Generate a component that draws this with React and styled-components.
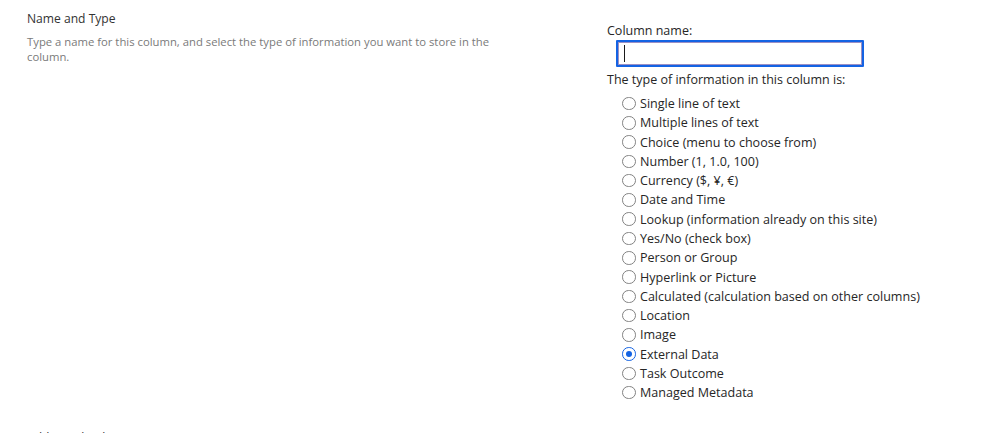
import React from "react";
import styled, { createGlobalStyle } from "styled-components";

const Global = createGlobalStyle`
  html, body { margin: 0; padding: 0; background: #fff; }
  body { font-family: "Segoe UI", "Open Sans", "Noto Sans", sans-serif; color: #323130; }
`;

const Page = styled.div`
  display: flex;
  flex-direction: column;
  padding-top: 10px;
`;

const Section = styled.section`
  display: grid;
  grid-template-columns: 580px 1fr;
  padding-left: 27px;
  padding-bottom: ${(p) => p.$gap || 0}px;
`;

const Info = styled.div`
  display: flex;
  flex-direction: column;
  gap: 6px;
  max-width: 482px;
`;

const Heading = styled.h2`
  margin: 0;
  font-size: 12.1px;
  font-weight: 400;
  line-height: 18px;
  color: #333;
`;

const Description = styled.p`
  margin: 0;
  font-size: 11.3px;
  line-height: 15px;
  color: #7a7a7a;
`;

const Fields = styled.div`
  display: flex;
  flex-direction: column;
  padding-top: 12px;
`;

const Label = styled.div`
  font-size: 12.5px;
  line-height: 18px;
  color: #262626;
`;

const InputBox = styled.div`
  box-sizing: border-box;
  width: 248px;
  height: 27px;
  margin: 0 0 4px 9px;
  border: 2px solid #1463e3;
  box-shadow: inset 0 0 0 1px #9b8fc4;
  border-radius: 1px;
  display: flex;
  align-items: center;
  padding-left: 6px;
`;

const Caret = styled.span`
  width: 1px;
  height: 17px;
  background: #1a1a1a;
`;

const RadioList = styled.div`
  display: flex;
  flex-direction: column;
  padding: 5px 0 0 15px;
`;

const RadioRow = styled.label`
  display: flex;
  align-items: center;
  gap: 4.5px;
  height: 19.27px;
  font-size: 12.55px;
  color: #262626;
`;

const Circle = styled.span`
  box-sizing: border-box;
  width: 13.5px;
  height: 13.5px;
  border-radius: 50%;
  border: 1.7px solid ${(p) => (p.$checked ? "#1463e3" : "#828282")};
  display: flex;
  align-items: center;
  justify-content: center;
  flex: none;
  &::after {
    content: "";
    width: 6px;
    height: 6px;
    border-radius: 50%;
    background: ${(p) => (p.$checked ? "#1463e3" : "transparent")};
  }
`;

const options = [
  "Single line of text",
  "Multiple lines of text",
  "Choice (menu to choose from)",
  "Number (1, 1.0, 100)",
  "Currency ($, ¥, €)",
  "Date and Time",
  "Lookup (information already on this site)",
  "Yes/No (check box)",
  "Person or Group",
  "Hyperlink or Picture",
  "Calculated (calculation based on other columns)",
  "Location",
  "Image",
  "External Data",
  "Task Outcome",
  "Managed Metadata",
];

export default function App() {
  return (
    <>
      <Global />
      <Page>
        <Section $gap={27}>
          <Info>
            <Heading>Name and Type</Heading>
            <Description>
              Type a name for this column, and select the type of information you want to store in the column.
            </Description>
          </Info>
          <Fields>
            <Label>Column name:</Label>
            <InputBox>
              <Caret />
            </InputBox>
            <Label>The type of information in this column is:</Label>
            <RadioList>
              {options.map((o) => (
                <RadioRow key={o}>
                  <Circle $checked={o === "External Data"} />
                  {o}
                </RadioRow>
              ))}
            </RadioList>
          </Fields>
        </Section>
        <Section>
          <Info>
            <Heading>Additional Column Settings</Heading>
          </Info>
        </Section>
      </Page>
    </>
  );
}
